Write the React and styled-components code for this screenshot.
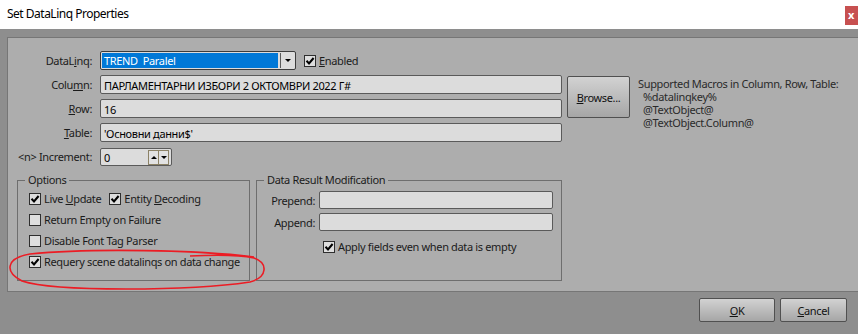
import React from 'react';
import styled, { createGlobalStyle } from 'styled-components';

const Global = createGlobalStyle`
  body {
    margin: 0;
    font-family: "Noto Sans", "Liberation Sans", sans-serif;
    font-size: 11px;
    letter-spacing: -0.35px;
    color: #1b1b1b;
  }
`;

const Window = styled.div`
  position: relative;
  width: 858px;
  height: 334px;
  overflow: hidden;
  background-color: #8e8e8e;
`;

const TitleBar = styled.div`
  height: 29px;
  display: flex;
  align-items: flex-start;
  background-color: #ffffff;
`;

const Title = styled.div`
  padding: 5px 0 0 7px;
  font-size: 12px;
  letter-spacing: -0.5px;
  color: #000000;
`;

const Close = styled.div`
  margin-left: auto;
  margin-top: 6px;
  width: 13px;
  height: 19px;
  background-color: #c75050;
  color: #ffffff;
  font-weight: bold;
  font-size: 11px;
  line-height: 18px;
  padding-left: 3px;
  box-sizing: border-box;
`;

const Body = styled.div`
  padding: 8px 0 0 7px;
`;

const Panel = styled.div`
  height: 255px;
  margin-right: -10px;
  box-sizing: border-box;
  background-color: #adadad;
  border: 1px solid #767676;
  padding-top: 13px;
`;

const Form = styled.div`
  display: grid;
  grid-template-columns: 84px 462px 63px auto;
  grid-template-rows: repeat(5, 19px);
  column-gap: 8px;
  row-gap: 5px;
`;

const Label = styled.div`
  grid-column: 1;
  text-align: right;
  line-height: 20px;
  white-space: nowrap;
`;

const FieldCell = styled.div`
  grid-column: 2;
  display: flex;
  align-items: center;
  gap: 8px;
`;

const Input = styled.div`
  width: ${p => p.width || '100%'};
  height: ${p => p.height || '19px'};
  box-sizing: border-box;
  background-color: #dcdcdc;
  border: 1px solid #5a5a5a;
  border-radius: 2px;
  padding: 1px 0 0 3px;
  display: flex;
  align-items: center;
  color: #000000;
  white-space: nowrap;
`;

const Combo = styled.div`
  width: 196px;
  height: 19px;
  box-sizing: border-box;
  border: 1px solid #3c3c3c;
  border-radius: 2px;
  background-color: #dcdcdc;
  display: flex;
  padding: 1px;
`;

const Selected = styled.div`
  flex: 1;
  background-color: #0078d7;
  color: #ffffff;
  padding-left: 2px;
  line-height: 16px;
  white-space: pre;
`;

const DropButton = styled.div`
  width: 13px;
  margin-left: 2px;
  border-left: 1px solid #5a5a5a;
  display: flex;
  align-items: center;
  justify-content: center;
`;

const Arrow = styled.div`
  width: 0;
  height: 0;
  border-left: 3px solid transparent;
  border-right: 3px solid transparent;
  ${p => (p.up ? 'border-bottom: 3px solid #000;' : 'border-top: 3px solid #000;')}
`;

const Spin = styled.div`
  margin-left: auto;
  margin-right: 2px;
  display: flex;
  height: 13px;
  border: 1px solid #8c8266;
`;

const SpinCell = styled.div`
  width: 9px;
  display: flex;
  align-items: center;
  justify-content: center;
  background-color: #e2e2e2;
  & + & {
    border-left: 1px solid #8c8266;
  }
`;

const Button = styled.div`
  width: ${p => p.width};
  height: ${p => p.height || '24px'};
  box-sizing: border-box;
  border: 1px solid #505050;
  border-radius: 2px;
  background: linear-gradient(#d2d2d2, #a6a6a6);
  display: flex;
  align-items: center;
  justify-content: center;
  color: #111111;
`;

const BrowseCell = styled.div`
  grid-column: 3;
  grid-row: 2 / 4;
  margin-left: -3px;
  padding-top: 1px;
  display: flex;
`;

const Macros = styled.div`
  grid-column: 4;
  grid-row: 2 / 6;
  margin-left: -3px;
  padding-top: 2px;
  line-height: 13px;
  color: #2a2a2a;
  white-space: nowrap;
`;

const MacroItem = styled.div`
  padding-left: 5px;
`;

const U = styled.span`
  text-decoration: underline;
`;

const CheckRow = styled.div`
  display: flex;
  align-items: center;
  gap: 3px;
  height: 21px;
  white-space: nowrap;
`;

const Box = styled.div`
  flex: none;
  width: 12px;
  height: 12px;
  box-sizing: border-box;
  border: 1px solid #2e2e2e;
  background-color: #dedede;
  display: flex;
  align-items: center;
  justify-content: center;
`;

const Groups = styled.div`
  display: flex;
  gap: 6px;
  margin: 6px 0 0 9px;
`;

const Group = styled.fieldset`
  margin: 0;
  min-width: 0;
  width: ${p => p.width};
  height: 109px;
  box-sizing: border-box;
  border: 1px solid #6e6e6e;
  padding: 0 0 0 11px;
`;

const Legend = styled.legend`
  margin-left: -4px;
  padding: 0 3px;
  line-height: 16px;
`;

const OptionLine = styled.div`
  display: flex;
  gap: 8px;
`;

const ModGrid = styled.div`
  display: grid;
  grid-template-columns: 50px 234px;
  grid-auto-rows: 18px;
  column-gap: 4px;
  row-gap: 4px;
  margin: 3px 0 0 -3px;
`;

const ModLabel = styled.div`
  text-align: right;
  line-height: 19px;
`;

const ApplyRow = styled.div`
  grid-column: 2;
  padding-left: 4px;
  margin-top: 1px;
`;

const Footer = styled.div`
  display: flex;
  justify-content: flex-end;
  gap: 5px;
  padding: 6px 11px 0 0;
`;

const Annotation = styled.svg`
  position: absolute;
  left: 0;
  top: 0;
  pointer-events: none;
`;

const Check = ({ checked, children }) => (
  <CheckRow>
    <Box>
      {checked && (
        <svg width="10" height="10" viewBox="0 0 10 10">
          <path d="M1.5 4.8 L4 7.5 L8.6 2" stroke="#000" strokeWidth="2" fill="none" />
        </svg>
      )}
    </Box>
    <span>{children}</span>
  </CheckRow>
);

export default function App() {
  return (
    <Window>
      <Global />
      <TitleBar>
        <Title>Set DataLinq Properties</Title>
        <Close>x</Close>
      </TitleBar>
      <Body>
        <Panel>
          <Form>
            <Label>DataL<U>i</U>nq:</Label>
            <FieldCell>
              <Combo>
                <Selected>TREND  Paralel</Selected>
                <DropButton><Arrow /></DropButton>
              </Combo>
              <Check checked><U>E</U>nabled</Check>
            </FieldCell>

            <Label>Colu<U>m</U>n:</Label>
            <FieldCell><Input>ПАРЛАМЕНТАРНИ ИЗБОРИ 2 ОКТОМВРИ 2022 Г#</Input></FieldCell>

            <Label><U>R</U>ow:</Label>
            <FieldCell><Input>16</Input></FieldCell>

            <Label><U>T</U>able:</Label>
            <FieldCell><Input>'Основни данни$'</Input></FieldCell>

            <Label>&lt;n&gt; Increment:</Label>
            <FieldCell>
              <Input width="72px" height="18px">
                0
                <Spin>
                  <SpinCell><Arrow up /></SpinCell>
                  <SpinCell><Arrow /></SpinCell>
                </Spin>
              </Input>
            </FieldCell>

            <BrowseCell>
              <Button width="63px" height="42px"><span><U>B</U>rowse...</span></Button>
            </BrowseCell>

            <Macros>
              Supported Macros in Column, Row, Table:
              <MacroItem>%datalinqkey%</MacroItem>
              <MacroItem>@TextObject@</MacroItem>
              <MacroItem>@TextObject.Column@</MacroItem>
            </Macros>
          </Form>

          <Groups>
            <Group width="233px">
              <Legend>Options</Legend>
              <OptionLine>
                <Check checked>Live <U>U</U>pdate</Check>
                <Check checked>Entity <U>D</U>ecoding</Check>
              </OptionLine>
              <Check>Return Empty on Failure</Check>
              <Check>Disable Font Tag Parser</Check>
              <Check checked>Requery scene datalinqs on data change</Check>
            </Group>
            <Group width="306px">
              <Legend>Data Result Modification</Legend>
              <ModGrid>
                <ModLabel>Prepend:</ModLabel>
                <Input height="18px" />
                <ModLabel>Append:</ModLabel>
                <Input height="18px" />
                <ApplyRow>
                  <Check checked>Apply fields even when data is empty</Check>
                </ApplyRow>
              </ModGrid>
            </Group>
          </Groups>
        </Panel>
        <Footer>
          <Button width="76px"><span><U>O</U>K</span></Button>
          <Button width="67px"><span><U>C</U>ancel</span></Button>
        </Footer>
      </Body>
      <Annotation width="858" height="334" viewBox="0 0 858 334">
        <path
          d="M254 257 C200 250 90 248 30 254 C6 258 4 272 22 281 C55 292 190 291 250 282 C268 277 268 263 254 258 C235 254 210 255 190 256"
          stroke="#ec1c24"
          strokeWidth="1.6"
          fill="none"
        />
      </Annotation>
    </Window>
  );
}
